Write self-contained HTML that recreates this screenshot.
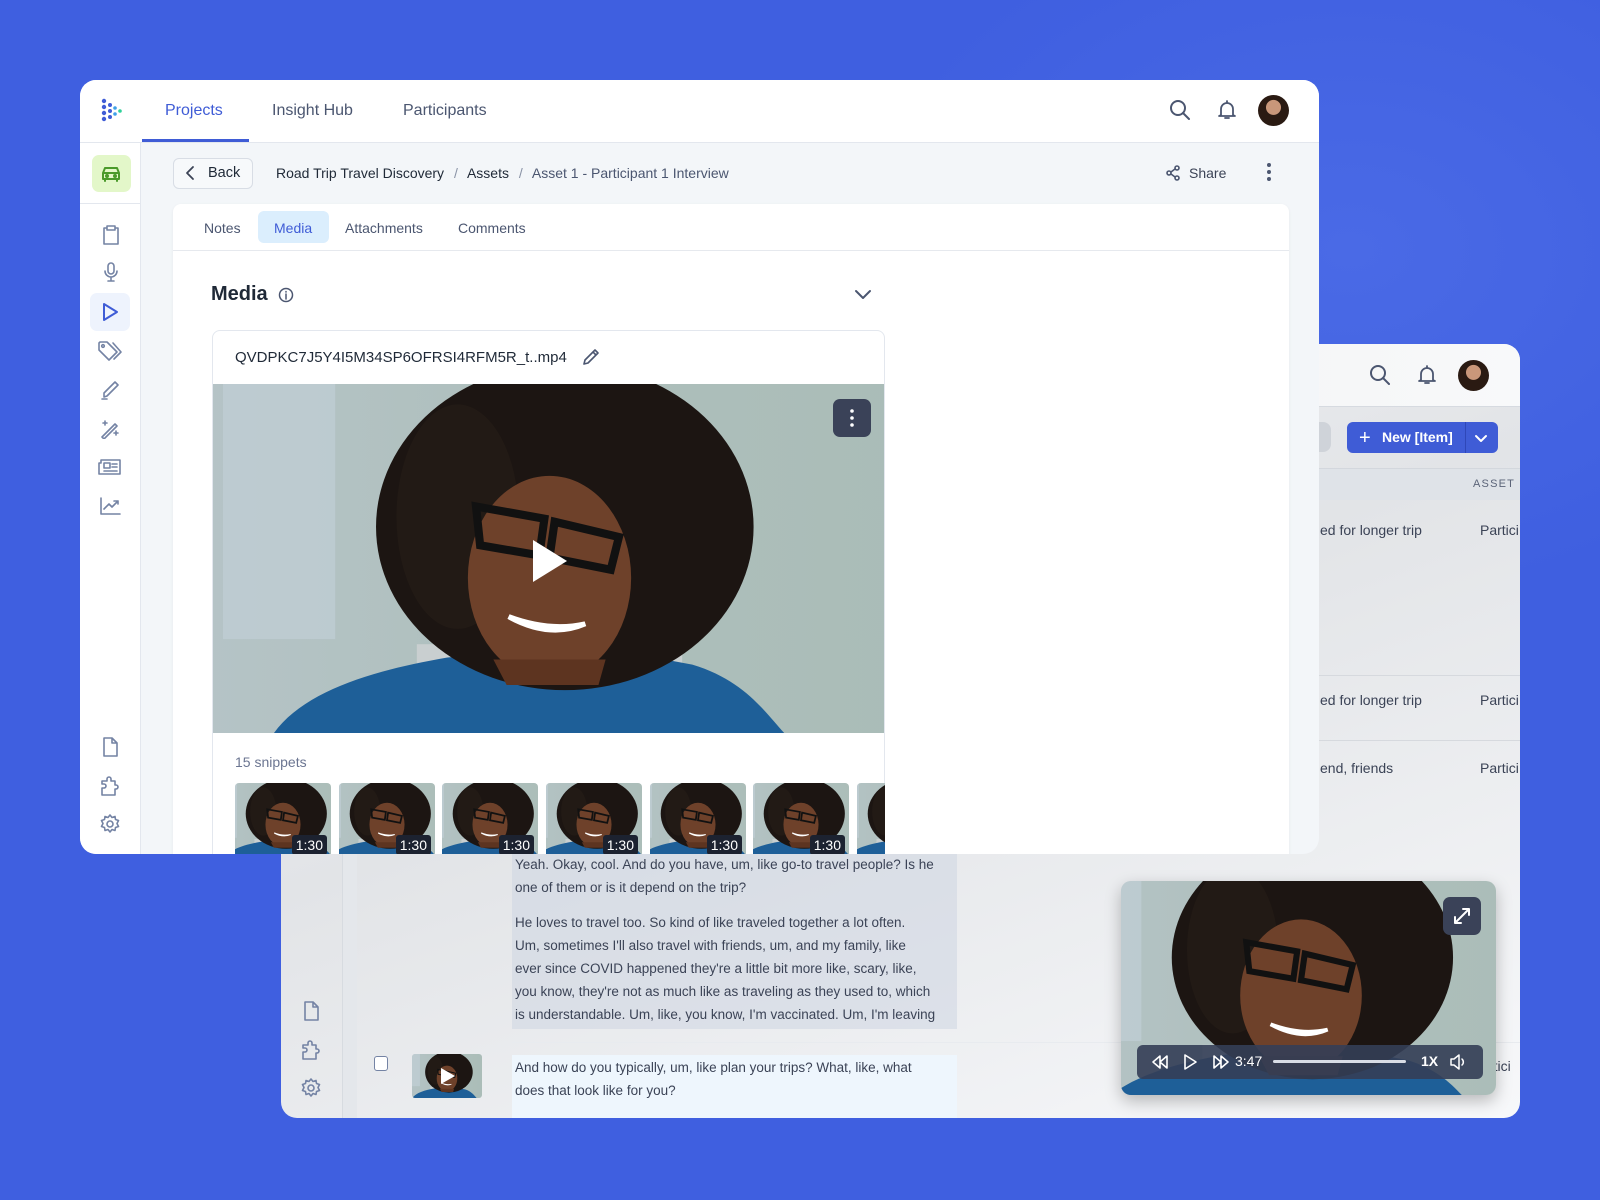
<!DOCTYPE html>
<html><head><meta charset="utf-8">
<style>
*{box-sizing:border-box;margin:0;padding:0}
svg{display:block}
body{width:1600px;height:1200px;overflow:hidden;background:radial-gradient(ellipse 700px 500px at 1350px 250px,#4a6ae6,#3f5fe0 70%);font-family:"Liberation Sans",sans-serif;position:relative;color:#1f2937}
.abs{position:absolute}
.card{position:absolute;border-radius:16px;overflow:hidden;background:#fff}
.ico{position:absolute;stroke:#7483a4;fill:none;stroke-width:1.6;stroke-linecap:round;stroke-linejoin:round}
.t{position:absolute;white-space:nowrap}
.tr{font-size:13.5px;color:#3b4356;line-height:23.3px;position:absolute;left:515px;white-space:nowrap}
.thumb{position:absolute;width:96px;height:75px;border-radius:4px;overflow:hidden}
.thumb span{position:absolute;right:4px;bottom:3px;background:#1c2230;color:#fff;font-size:14px;padding:2px 4px;border-radius:3px}
</style></head><body>
<svg width="0" height="0" style="position:absolute">
<defs>
<linearGradient id="bg" x1="0" x2="1"><stop offset="0" stop-color="#b9c6cc"/><stop offset=".5" stop-color="#aebfbc"/><stop offset="1" stop-color="#a8bbb5"/></linearGradient>
<symbol id="face" viewBox="0 0 660 342" preserveAspectRatio="xMidYMid slice">
<rect x="-200" y="-50" width="1060" height="442" fill="url(#bg)"/>
<rect x="10" y="0" width="110" height="250" fill="#c3d0d8" opacity=".6"/>
<rect x="200" y="255" width="260" height="60" fill="#c9cfd0"/>
<path d="M60 342 C90 300 160 280 230 268 L300 262 L400 262 L470 275 C520 290 540 320 560 342 L560 400 L60 400 Z" fill="#1e5f98"/>
<ellipse cx="345" cy="140" rx="185" ry="160" fill="#1c1512"/>
<ellipse cx="240" cy="130" rx="60" ry="110" fill="#221a15"/>
<ellipse cx="330" cy="190" rx="80" ry="100" fill="#6e412a"/>
<path d="M275 270 L385 270 L378 295 L288 295Z" fill="#5d3420"/>
<path d="M258 120 L325 132 L320 168 L262 158Z M335 135 L398 150 L390 182 L330 170Z" fill="none" stroke="#111" stroke-width="8"/>
<path d="M290 228 Q330 250 365 235 Q330 243 290 228Z" fill="#fff" stroke="#fff" stroke-width="5"/>
</symbol>
</defs>
</svg>

<!-- BACK CARD -->
<div class="card" style="left:281px;top:344px;width:1239px;height:774px;background:linear-gradient(160deg,#f4f5f7 0%,#e2e4e7 45%,#f7f8fa 100%)">
  <div class="abs" style="left:0;top:0;width:1239px;height:63px;background:linear-gradient(90deg,#e9eaec,#f8f9fa);border-bottom:1px solid #d6dae0"></div>
  <svg class="ico" style="left:1088px;top:20px;stroke:#4b5670;stroke-width:2" width="22" height="22" viewBox="0 0 22 22"><circle cx="9" cy="9" r="7"/><path d="M14 14l6 6"/></svg>
  <svg class="ico" style="left:1135px;top:20px;stroke:#4b5670;stroke-width:1.8" width="22" height="22" viewBox="0 0 22 22"><path d="M5 16V10a6 6 0 0112 0v6l2 1H3z M9 19h4 M11 2v2"/></svg>
  <div class="abs" style="left:1177px;top:16px;width:31px;height:31px;border-radius:50%;background:radial-gradient(circle at 50% 40%,#c9977a 0 30%,#2a1a12 32%)"></div>
  <div class="abs" style="left:1000px;top:78px;width:50px;height:30px;border-radius:8px;background:#cfd3d9"></div>
  <div class="abs" style="left:1066px;top:78px;width:151px;height:31px;border-radius:6px;background:#3f5cd6;color:#fff;font-size:14px;font-weight:bold">
    <span class="t" style="left:12px;top:5px;font-size:20px;font-weight:normal">+</span>
    <span class="t" style="left:35px;top:7px">New [Item]</span>
    <div class="abs" style="left:118px;top:0;width:1px;height:31px;background:#2f47b8"></div>
    <svg class="ico" style="left:126px;top:8px;stroke:#fff;stroke-width:2" width="16" height="16" viewBox="0 0 16 16"><path d="M3 6l5 5 5-5"/></svg>
  </div>
  <div class="abs" style="left:0;top:124px;width:1239px;height:32px;background:#dfe3e8;border-top:1px solid #d3d7dd"></div>
  <span class="t" style="left:1192px;top:134px;font-size:11px;letter-spacing:1.2px;color:#5b6478">ASSET</span>
  <span class="t" style="left:1039px;top:178px;font-size:14px;color:#3b4356">ed for longer trip</span>
  <span class="t" style="left:1199px;top:178px;font-size:14px;color:#3b4356">Partici</span>
  <div class="abs" style="left:1000px;top:331px;width:239px;height:1px;background:#d6d9de"></div>
  <span class="t" style="left:1039px;top:348px;font-size:14px;color:#3b4356">ed for longer trip</span>
  <span class="t" style="left:1199px;top:348px;font-size:14px;color:#3b4356">Partici</span>
  <div class="abs" style="left:1000px;top:396px;width:239px;height:1px;background:#d6d9de"></div>
  <span class="t" style="left:1039px;top:416px;font-size:14px;color:#3b4356">end, friends</span>
  <span class="t" style="left:1199px;top:416px;font-size:14px;color:#3b4356">Partici</span>
  <div class="abs" style="left:61px;top:0;width:15px;height:774px;background:#e4e7eb;border-left:1px solid #d7dbe0"></div>
  <div class="abs" style="left:231px;top:0;width:445px;height:685px;background:rgba(205,214,226,.55)"></div>
  <div class="abs" style="left:231px;top:698px;width:1008px;height:1px;background:#e8ebef"></div>
  <div class="abs" style="left:231px;top:711px;width:445px;height:70px;background:#eef6fd"></div>
  <div class="abs" style="left:93px;top:712px;width:14px;height:15px;border:1.5px solid #7483a4;border-radius:3px;background:#fff"></div>
  <div class="abs" style="left:131px;top:710px;width:70px;height:44px;border-radius:3px;overflow:hidden"><svg width="70" height="44"><use href="#face" width="70" height="44"/></svg><div class="abs" style="left:29px;top:14px;width:0;height:0;border-left:14px solid #fff;border-top:8px solid transparent;border-bottom:8px solid transparent"></div></div>
  <span class="t" style="left:1208px;top:714px;font-size:14px;color:#3b4356">rtici</span>
</div>
<div class="tr" style="top:853px">Yeah. Okay, cool. And do you have, um, like go-to travel people? Is he</div>
<div class="tr" style="top:876px">one of them or is it depend on the trip?</div>
<div class="tr" style="top:911px">He loves to travel too. So kind of like traveled together a lot often.</div>
<div class="tr" style="top:934px">Um, sometimes I'll also travel with friends, um, and my family, like</div>
<div class="tr" style="top:957px">ever since COVID happened they're a little bit more like, scary, like,</div>
<div class="tr" style="top:980px">you know, they're not as much like as traveling as they used to, which</div>
<div class="tr" style="top:1003px">is understandable. Um, like, you know, I'm vaccinated. Um, I'm leaving</div>
<div class="tr" style="top:1056px">And how do you typically, um, like plan your trips? What, like, what</div>
<div class="tr" style="top:1079px">does that look like for you?</div>
<svg class="ico" style="left:302px;top:1001px" width="18" height="20" viewBox="0 0 18 20"><path d="M3 1h8l5 5v13H3z M11 1v5h5"/></svg>
<svg class="ico" style="left:300px;top:1039px" width="22" height="22" viewBox="0 0 22 22"><path d="M3 20v-7h2a2 2 0 100-4H3V6h5V4a2 2 0 114 0v2h4v4h1a2 2 0 110 4h-1v6z"/></svg>
<svg class="ico" style="left:301px;top:1078px" width="20" height="20" viewBox="0 0 20 20"><circle cx="10" cy="10" r="3"/><path d="M10 1l2 2.5 3-1 .5 3 3 1-1.5 3 1.5 3-3 1-.5 3-3-1-2 2.5-2-2.5-3 1-.5-3-3-1 1.5-3-1.5-3 3-1 .5-3 3 1z"/></svg>

<!-- MINI PLAYER -->
<div class="abs" style="left:1121px;top:881px;width:375px;height:214px;border-radius:10px;overflow:hidden;box-shadow:0 6px 16px rgba(0,0,0,.25)">
  <svg width="375" height="214"><use href="#face" x="-60" y="-30" width="480" height="260"/></svg>
  <div class="abs" style="left:322px;top:16px;width:38px;height:38px;border-radius:7px;background:#3a4258"></div>
  <svg class="ico" style="left:331px;top:25px;stroke:#fff;stroke-width:2" width="20" height="20" viewBox="0 0 20 20"><path d="M3 17L17 3 M11 3h6v6 M3 11v6h6"/></svg>
  <div class="abs" style="left:16px;top:164px;width:346px;height:34px;border-radius:6px;background:rgba(52,62,86,.9)"></div>
  <svg class="ico" style="left:30px;top:172px;stroke:#fff;stroke-width:1.6" width="110" height="18" viewBox="0 0 110 18"><path d="M9 3L2 9l7 6z M16 3l-7 6 7 6z M34 2v14l11-7z M63 3l7 6-7 6z M70 3l7 6-7 6z"/></svg>
  <span class="t" style="left:114px;top:172px;color:#fff;font-size:14px">3:47</span>
  <div class="abs" style="left:152px;top:179px;width:133px;height:3px;background:#d9dde6;border-radius:2px"></div>
  <span class="t" style="left:300px;top:172px;color:#fff;font-size:14px;font-weight:bold">1X</span>
  <svg class="ico" style="left:328px;top:172px;stroke:#fff;stroke-width:1.5" width="18" height="18" viewBox="0 0 18 18"><path d="M2 6h3l5-4v14l-5-4H2z M13 6a4 4 0 010 6"/></svg>
</div>

<!-- FRONT CARD -->
<div class="card" style="left:80px;top:80px;width:1239px;height:774px;background:#f3f6f9">
  <div class="abs" style="left:0;top:0;width:1239px;height:63px;background:#fff;border-bottom:1px solid #e3e7ee"></div>
  <svg class="abs" style="left:20px;top:18px" width="26" height="26" viewBox="0 0 26 26">
    <g fill="#3f5cd6"><circle cx="4" cy="3" r="2.2"/><circle cx="4" cy="9" r="2.2"/><circle cx="4" cy="15" r="2.2"/><circle cx="4" cy="21" r="2.2"/><circle cx="10" cy="7" r="2"/><circle cx="10" cy="13" r="2"/><circle cx="10" cy="19" r="2"/><circle cx="15" cy="10" r="1.8" fill="#3fa0e8"/><circle cx="15" cy="16" r="1.8" fill="#3fa0e8"/><circle cx="20" cy="13" r="1.8" fill="#2ed19a"/></g></svg>
  <span class="t" style="left:85px;top:22px;font-size:16px;color:#3f5cd6;font-weight:500">Projects</span>
  <div class="abs" style="left:62px;top:59px;width:107px;height:3px;background:#3f5cd6"></div>
  <span class="t" style="left:192px;top:22px;font-size:16px;color:#4b5670">Insight Hub</span>
  <span class="t" style="left:323px;top:22px;font-size:16px;color:#4b5670">Participants</span>
  <svg class="ico" style="left:1089px;top:19px;stroke:#4b5670;stroke-width:2" width="22" height="22" viewBox="0 0 22 22"><circle cx="9" cy="9" r="7"/><path d="M14 14l6 6"/></svg>
  <svg class="ico" style="left:1136px;top:19px;stroke:#4b5670;stroke-width:1.8" width="22" height="22" viewBox="0 0 22 22"><path d="M5 16V10a6 6 0 0112 0v6l2 1H3z M9 19h4 M11 2v2"/></svg>
  <div class="abs" style="left:1178px;top:15px;width:31px;height:31px;border-radius:50%;background:radial-gradient(circle at 50% 40%,#c9977a 0 30%,#2a1a12 32%)"></div>
  <div class="abs" style="left:0;top:63px;width:61px;height:711px;background:#fff;border-right:1px solid #e3e7ee"></div>
  <div class="abs" style="left:0;top:123px;width:61px;height:1px;background:#e3e7ee"></div>
  <div class="abs" style="left:12px;top:75px;width:39px;height:37px;border-radius:7px;background:#e3f7c9"></div>
  <svg class="ico" style="left:20px;top:83px;stroke:#4a9a2a;stroke-width:2" width="22" height="22" viewBox="0 0 22 22"><path d="M3 10l2-5h12l2 5v6H3z M3 10h16 M5 16v2 M17 16v2"/><circle cx="7" cy="13" r="1"/><circle cx="15" cy="13" r="1"/></svg>
  <svg class="ico" style="left:22px;top:145px" width="18" height="20" viewBox="0 0 18 20"><path d="M5 3H2v16h14V3h-3 M5 1h8v4H5z"/></svg>
  <svg class="ico" style="left:22px;top:182px" width="18" height="20" viewBox="0 0 18 20"><rect x="6" y="1" width="6" height="11" rx="3"/><path d="M3 9a6 6 0 0012 0 M9 15v4 M6 19h6"/></svg>
  <div class="abs" style="left:10px;top:213px;width:40px;height:38px;border-radius:7px;background:#eef3fd"></div>
  <svg class="ico" style="left:20px;top:222px;stroke:#3f5cd6;stroke-width:2" width="20" height="20" viewBox="0 0 20 20"><path d="M4 2l13 8-13 8z"/></svg>
  <svg class="ico" style="left:17px;top:260px" width="26" height="22" viewBox="0 0 26 22"><path d="M2 3v7l10 10 8-8L10 2H3z M16 3l8 9-7 7"/><circle cx="6" cy="6" r="1.3"/></svg>
  <svg class="ico" style="left:20px;top:300px" width="22" height="20" viewBox="0 0 22 20"><path d="M4 17l3-1 11-11-3-3L4 13z M2 19h5"/></svg>
  <svg class="ico" style="left:19px;top:339px" width="22" height="20" viewBox="0 0 22 20"><path d="M3 18L16 5l2 2L5 20z M6 2v4 M4 4h4 M17 12v4 M15 14h4"/></svg>
  <svg class="ico" style="left:17px;top:378px" width="24" height="18" viewBox="0 0 24 18"><path d="M4 2h19v14H2V5h2z M7 5h6v5H7z M15 6h5 M15 9h5 M7 13h13"/></svg>
  <svg class="ico" style="left:19px;top:417px" width="22" height="18" viewBox="0 0 22 18"><path d="M2 1v16h19 M5 12l5-5 3 3 6-6 M15 4h4v3"/></svg>
  <svg class="ico" style="left:21px;top:657px" width="18" height="20" viewBox="0 0 18 20"><path d="M3 1h8l5 5v13H3z M11 1v5h5"/></svg>
  <svg class="ico" style="left:19px;top:695px" width="22" height="22" viewBox="0 0 22 22"><path d="M3 20v-7h2a2 2 0 100-4H3V6h5V4a2 2 0 114 0v2h4v4h1a2 2 0 110 4h-1v6z"/></svg>
  <svg class="ico" style="left:20px;top:734px" width="20" height="20" viewBox="0 0 20 20"><circle cx="10" cy="10" r="3"/><path d="M10 1l2 2.5 3-1 .5 3 3 1-1.5 3 1.5 3-3 1-.5 3-3-1-2 2.5-2-2.5-3 1-.5-3-3-1 1.5-3-1.5-3 3-1 .5-3 3 1z"/></svg>
  <div class="abs" style="left:93px;top:78px;width:80px;height:31px;border:1px solid #d8dde5;border-radius:6px;background:#f7f9fb"></div>
  <svg class="ico" style="left:104px;top:85px;stroke:#3b4356;stroke-width:1.8" width="14" height="16" viewBox="0 0 14 16"><path d="M9 2L3 8l6 6"/></svg>
  <span class="t" style="left:128px;top:85px;font-size:14.5px;color:#1f2937">Back</span>
  <span class="t" style="left:196px;top:85px;font-size:14px;color:#1f2937">Road Trip Travel Discovery <span style="color:#8a93a6;margin:0 6px">/</span> Assets <span style="color:#8a93a6;margin:0 6px">/</span> <span style="color:#4b5670">Asset 1 - Participant 1 Interview</span></span>
  <svg class="ico" style="left:1085px;top:85px;stroke:#4b5670" width="16" height="16" viewBox="0 0 16 16"><circle cx="12" cy="3" r="2"/><circle cx="4" cy="8" r="2"/><circle cx="12" cy="13" r="2"/><path d="M6 7l4-3 M6 9l4 3"/></svg>
  <span class="t" style="left:1109px;top:85px;font-size:14px;color:#3b4356">Share</span>
  <svg class="abs" style="left:1186px;top:82px" width="6" height="20" viewBox="0 0 6 20"><g fill="#4b5670"><circle cx="3" cy="3" r="2"/><circle cx="3" cy="10" r="2"/><circle cx="3" cy="17" r="2"/></g></svg>
  <div class="abs" style="left:93px;top:124px;width:1116px;height:660px;background:#fff;border-radius:8px 8px 0 0;box-shadow:0 1px 3px rgba(0,0,0,.06)"></div>
  <div class="abs" style="left:93px;top:170px;width:1116px;height:1px;background:#e6e9ee"></div>
  <span class="t" style="left:124px;top:140px;font-size:14px;color:#4b5670">Notes</span>
  <div class="abs" style="left:178px;top:131px;width:71px;height:32px;border-radius:6px;background:#dbeefd"></div>
  <span class="t" style="left:194px;top:140px;font-size:14px;color:#3f5cd6">Media</span>
  <span class="t" style="left:265px;top:140px;font-size:14px;color:#4b5670">Attachments</span>
  <span class="t" style="left:378px;top:140px;font-size:14px;color:#4b5670">Comments</span>
  <span class="t" style="left:131px;top:203px;font-size:20px;font-weight:bold;color:#1f2937">Media</span>
  <svg class="ico" style="left:198px;top:207px;stroke:#4b5670;stroke-width:1.5" width="16" height="16" viewBox="0 0 16 16"><circle cx="8" cy="8" r="6.5"/><path d="M8 7v5 M8 4.5v.5"/></svg>
  <svg class="ico" style="left:774px;top:207px;stroke:#4b5670;stroke-width:2" width="18" height="16" viewBox="0 0 18 16"><path d="M2 4l7 7 7-7"/></svg>
  <div class="abs" style="left:132px;top:250px;width:673px;height:540px;border:1px solid #e3e7ee;border-radius:8px;background:#fff;overflow:hidden">
    <span class="t" style="left:22px;top:18px;font-size:15px;color:#1f2937">QVDPKC7J5Y4I5M34SP6OFRSI4RFM5R_t..mp4</span>
    <svg class="ico" style="left:368px;top:16px;stroke:#4b5670" width="20" height="20" viewBox="0 0 20 20"><path d="M3 17l1-4L14 3l3 3L7 16z M12 5l3 3"/></svg>
    <div class="abs" style="left:0;top:53px;width:673px;height:349px"><svg width="673" height="349"><use href="#face" width="673" height="349"/></svg></div>
    <div class="abs" style="left:620px;top:68px;width:38px;height:38px;border-radius:7px;background:#3a4258"></div>
    <svg class="abs" style="left:636px;top:77px" width="6" height="20" viewBox="0 0 6 20"><g fill="#fff"><circle cx="3" cy="3" r="1.8"/><circle cx="3" cy="10" r="1.8"/><circle cx="3" cy="17" r="1.8"/></g></svg>
    <div class="abs" style="left:320px;top:209px;width:0;height:0;border-left:34px solid #fff;border-top:21px solid transparent;border-bottom:21px solid transparent"></div>
    <span class="t" style="left:22px;top:423px;font-size:14px;color:#6b7591">15 snippets</span>
  </div>
  <div class="thumb" style="left:155px;top:703px"><svg width="96" height="75"><use href="#face" width="96" height="75"/></svg><span>1:30</span></div>
  <div class="thumb" style="left:259px;top:703px"><svg width="96" height="75"><use href="#face" width="96" height="75"/></svg><span>1:30</span></div>
  <div class="thumb" style="left:362px;top:703px"><svg width="96" height="75"><use href="#face" width="96" height="75"/></svg><span>1:30</span></div>
  <div class="thumb" style="left:466px;top:703px"><svg width="96" height="75"><use href="#face" width="96" height="75"/></svg><span>1:30</span></div>
  <div class="thumb" style="left:570px;top:703px"><svg width="96" height="75"><use href="#face" width="96" height="75"/></svg><span>1:30</span></div>
  <div class="thumb" style="left:673px;top:703px"><svg width="96" height="75"><use href="#face" width="96" height="75"/></svg><span>1:30</span></div>
  <div class="thumb" style="left:777px;top:703px;width:28px;border-radius:4px 0 0 4px"><svg width="96" height="75"><use href="#face" width="96" height="75"/></svg></div>
</div>
</body></html>
